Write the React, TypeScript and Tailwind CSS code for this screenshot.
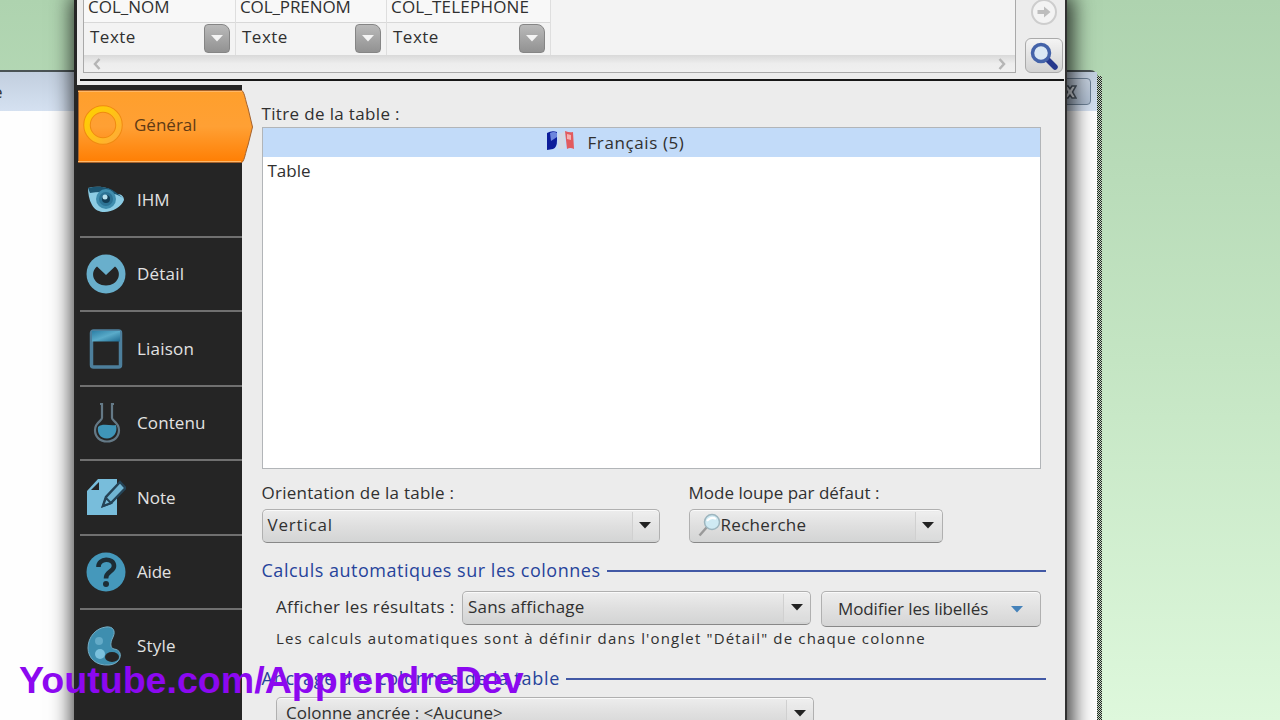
import type { ReactNode } from "react";
import { clsx } from "clsx";

const columns = [
  { name: "COL_NOM", width: "w-[152px]", nameTracking: "tracking-[0px]" },
  { name: "COL_PRENOM", width: "w-[151px]", nameTracking: "tracking-[-0.1px]" },
  { name: "COL_TELEPHONE", width: "w-[164px]", nameTracking: "tracking-[0.2px]" },
];

function EyeIcon() {
  return (
    <svg width="40" height="40" viewBox="0 0 40 40">
      <path d="M2 8 C12 5 24 7 31 14 C36 14 38 17 38 20 C34 31 13 38 6 25 C3 20 2 13 2 8Z" fill="#8ccce4" />
      <path d="M2 8 C13 5 25 7 32 14 L37 18 C28 12 16 11 4 13Z" fill="#1d5672" />
      <circle cx="20" cy="19" r="10" fill="#3f8dae" />
      <circle cx="20" cy="19" r="7" fill="#2c7294" />
      <circle cx="20" cy="19" r="4" fill="#123d56" />
      <circle cx="19" cy="17" r="2.500" fill="#b7e0ee" />
    </svg>
  );
}

function DetailIcon() {
  return (
    <svg width="40" height="40" viewBox="0 0 40 40">
      <circle cx="20" cy="20" r="19.500" fill="#69afcc" />
      <path d="M11 12.500 L20 21 L29 12.500 C37 19 32 31.500 20 31.500 C8 31.500 3 19 11 12.500Z" fill="#252525" />
    </svg>
  );
}

function LiaisonIcon() {
  return (
    <svg width="40" height="40" viewBox="0 0 40 40">
      <defs>
        <linearGradient id="liaison" x2="1" y2="1">
          <stop offset="0" stopColor="#2c7fa5" />
          <stop offset="0.5" stopColor="#5aabc9" />
          <stop offset="1" stopColor="#1f6a90" />
        </linearGradient>
      </defs>
      <rect x="5.500" y="2" width="29" height="36" rx="2" fill="#252525" stroke="#4d7f9c" strokeWidth="3.500" />
      <rect x="6" y="2" width="28" height="10.500" fill="url(#liaison)" />
    </svg>
  );
}

function FlaskIcon() {
  return (
    <svg width="40" height="40" viewBox="0 0 40 40">
      <path
        d="M14 1 H16 V15 C16 18 9 19 9 27 C9 34 14 38.500 21 38.500 C28 38.500 33 34 33 27 C33 19 26 18 26 15 V1 H28"
        fill="none"
        stroke="#647986"
        strokeWidth="2.200"
      />
      <path d="M12 24 C16 20 24 23 30 22 C32 30 27 35.500 21 35.500 C14 35.500 11 30 12 24Z" fill="#3f95b8" />
    </svg>
  );
}

function NoteIcon() {
  return (
    <svg width="40" height="40" viewBox="0 0 40 40">
      <path d="M12 2 H31 V38 H1 V14Z" fill="#78bddb" />
      <path d="M13 5 V13 H5Z" fill="#252525" />
      <path d="M34 5 L39.500 11 L25 26 L17 29 L20 20Z" fill="#70b5d3" stroke="#254356" strokeWidth="2.500" />
      <path d="M20 21 L25 26 L17 29Z" fill="#79bdd9" stroke="#254356" strokeWidth="2" />
    </svg>
  );
}

function HelpIcon() {
  return (
    <svg width="40" height="40" viewBox="0 0 40 40">
      <circle cx="20" cy="20" r="19.500" fill="#4598bb" />
      <path
        d="M12.500 15 C12 5.500 28 5.500 28 14 C28 20 20 19 20 26.500"
        fill="none"
        stroke="#1d2d36"
        strokeWidth="4.600"
      />
      <circle cx="20" cy="32" r="3" fill="#1d2d36" />
    </svg>
  );
}

function PaletteIcon() {
  return (
    <svg width="40" height="40" viewBox="0 0 40 40">
      <path
        d="M20 1 C27 0 30 5 27 11 C24 17 24 22 28 23 C38 24 36 38 23 39 C10 40 2 32 2 22 C2 11 10 2 20 1Z"
        fill="#3e8eaf"
        stroke="#76adc4"
        strokeWidth="1"
      />
      <ellipse cx="26" cy="31" rx="7" ry="5" fill="#252525" />
      <circle cx="13" cy="15" r="4" fill="#64abc8" />
      <circle cx="14" cy="28" r="5" fill="#7bc1dd" />
    </svg>
  );
}

const tabs: { label: string; icon: ReactNode; tracking: string }[] = [
  { label: "IHM", icon: <EyeIcon />, tracking: "" },
  { label: "Détail", icon: <DetailIcon />, tracking: "tracking-[0.2px]" },
  { label: "Liaison", icon: <LiaisonIcon />, tracking: "tracking-[0.2px]" },
  { label: "Contenu", icon: <FlaskIcon />, tracking: "tracking-[0.1px]" },
  { label: "Note", icon: <NoteIcon />, tracking: "" },
  { label: "Aide", icon: <HelpIcon />, tracking: "tracking-[-0.2px]" },
  { label: "Style", icon: <PaletteIcon />, tracking: "tracking-[0.2px]" },
];

function Arrow({ className }: { className?: string }) {
  return (
    <svg width="14" height="8" viewBox="0 0 14 8" className={className}>
      <path d="M1 1 H13 L7 7.500Z" fill="currentColor" />
    </svg>
  );
}

function Select({ className, children }: { className: string; children: ReactNode }) {
  return (
    <div
      className={clsx(
        "flex h-[34px] shrink-0 items-center rounded-[5px] border border-[#b0b0b0] border-b-[#888] bg-linear-to-b from-[#ededed] via-[#dfdfdf] to-[#d3d4d4] shadow-[inset_0_1px_0_#fafafa]",
        className
      )}
    >
      <div className="-mt-[2px] flex flex-1 items-center">{children}</div>
      <div className="flex h-[28px] w-[27px] items-center justify-center border-l border-[#d0d0d0] bg-white/15 pr-[1px] pb-[2px]">
        <Arrow className="text-[#222]" />
      </div>
    </div>
  );
}

function SectionTitle({ children, tracking }: { children: ReactNode; tracking: string }) {
  return (
    <div className="-mr-px flex h-6 items-center gap-[6px] text-[18px] text-[#26439b]">
      <span className={tracking}>{children}</span>
      <div className="mt-[2px] mr-px h-[2px] flex-1 bg-[#4259a5]" />
    </div>
  );
}

function BackWindow() {
  return (
    <div className="absolute top-[70px] -left-4 h-[700px] w-[1114px] rounded-tr-lg border-t-2 border-r border-[#4a5354] bg-[#fefefe]">
      <div className="flex h-[39px] items-center justify-between bg-linear-to-b from-[#c2cfdf] to-[#d5e1f1] pr-[6px] pl-[9px]">
        <span className="text-[17px] text-[#333]">e</span>
        <div className="flex h-[27px] w-[42px] items-center justify-center rounded-sm border border-[#6d8196] bg-linear-to-b from-[#c5d0de] to-[#aebdd0]">
          <svg width="14" height="14" viewBox="0 0 14 14" className="-ml-px">
            <path d="M1 1 H5 L7 4 L9 1 H13 L9.500 7 L13 13 H9 L7 10 L5 13 H1 L4.500 7Z" fill="#e4e9ef" stroke="#4e5965" strokeWidth="1.500" />
          </svg>
        </div>
      </div>
      <div className="absolute top-[4px] -right-[5px] h-[700px] w-[5px] bg-[#333] bg-[repeating-conic-gradient(#202820_0_25%,#c5d5c5_0_50%)] bg-size-[2px_2px]" />
    </div>
  );
}

function TableHeader() {
  return (
    <div className="flex h-[79px] shrink-0 justify-between pl-[4px]">
      <div className="flex h-[73px] w-[933px] flex-col border-x border-b border-[#a9a9a9] bg-[#f3f3f3]">
        <div className="flex h-[55px]">
          {columns.map((c) => (
            <div key={c.name} className={clsx("flex flex-col border-r border-[#dedede]", c.width)}>
              <div className={clsx("h-[23px] border-b border-[#d8d8d8] bg-[#f8f8f8] pl-[4px] text-[17px] leading-[14px]", c.nameTracking)}>
                {c.name}
              </div>
              <div className="flex h-[30px] items-center justify-between pr-[5px] pl-[6px]">
                <span className="-mt-[3px] tracking-[0.5px]">Texte</span>
                <div className="flex h-[29px] w-[26px] items-center justify-center rounded-sm rounded-tr-lg border border-[#858585] bg-linear-to-b from-[#bababa] to-[#929292]">
                  <Arrow className="text-[#f4f4f4]" />
                </div>
              </div>
            </div>
          ))}
        </div>
        <div className="flex flex-1 items-center justify-between bg-linear-to-b from-[#d9d9d9] via-[#ededed] to-[#f0f0f0] px-[9px]">
          <svg width="8" height="12" viewBox="0 0 8 12">
            <path d="M6.500 1 L2 6 L6.500 11" fill="none" stroke="#b5b5b5" strokeWidth="2.500" />
          </svg>
          <svg width="8" height="12" viewBox="0 0 8 12">
            <path d="M1.500 1 L6 6 L1.500 11" fill="none" stroke="#b5b5b5" strokeWidth="2.500" />
          </svg>
        </div>
      </div>
      <div className="flex w-[39px] flex-col">
        <div className="flex h-[38px] items-center justify-center">
          <svg width="28" height="28" viewBox="0 0 28 28" className="-mt-[14px] -ml-px">
            <circle cx="14" cy="14" r="12" fill="#f3f3f3" stroke="#cdcdcd" strokeWidth="2" />
            <path d="M7.500 12 H14 V8.500 L20.500 14 L14 19.500 V16 H7.500Z" fill="#bdbdbd" />
          </svg>
        </div>
        <div className="flex h-[35px] w-[38px] items-center justify-center rounded-md border border-[#aaa] bg-linear-to-b from-[#f4f4f4] to-[#d2d2d2]">
          <svg width="28" height="28" viewBox="0 0 28 28">
            <path d="M17 17 L25 25" stroke="#26388c" strokeWidth="5.500" strokeLinecap="round" />
            <circle cx="11" cy="11" r="8.500" fill="#dae8f4" stroke="#4463a9" strokeWidth="3.500" />
          </svg>
        </div>
      </div>
    </div>
  );
}

function Sidebar() {
  return (
    <div className="mt-[4px] flex w-[165px] shrink-0 flex-col bg-[#252525] text-[#e2e2e2]">
      <div className="relative mt-[5px] flex h-[73px] shrink-0 items-center">
        <svg width="176" height="73" viewBox="0 0 176 73" className="absolute top-0 left-px">
          <defs>
            <linearGradient id="active" x2="0" y2="1">
              <stop offset="0" stopColor="#ff9f2c" />
              <stop offset="0.5" stopColor="#ffa034" />
              <stop offset="1" stopColor="#ff7e03" />
            </linearGradient>
            <linearGradient id="ring" x2="1" y2="1">
              <stop offset="0" stopColor="#ffd000" />
              <stop offset="0.45" stopColor="#ffc414" />
              <stop offset="1" stopColor="#ffa93a" />
            </linearGradient>
          </defs>
          <path d="M0.500 0.500 H164 C167 4 167 9 170 18 L174.500 37 L170 55 C167 64 167 69 164 72.500 H0.500Z" fill="url(#active)" stroke="#a5622c" />
          <path d="M0 1.500 H164 M0 71.500 H163" stroke="#ffb868" />
          <circle cx="25" cy="35" r="16" fill="none" stroke="#f08a10" strokeWidth="7.500" />
          <circle cx="25" cy="35" r="16" fill="none" stroke="url(#ring)" strokeWidth="5.500" />
        </svg>
        <span className="relative -mt-[3px] ml-[57px] text-[#5f3a14]">Général</span>
      </div>
      <div className="mt-[0.6px] ml-[3px] divide-y-2 divide-[#707070]">
        {tabs.map((t) => (
          <div key={t.label} className="flex h-[74.4px] items-center gap-[11px] pl-[6px] last:pb-[3px]">
            {t.icon}
            <span className={t.tracking}>{t.label}</span>
          </div>
        ))}
      </div>
    </div>
  );
}

function GeneralPane() {
  return (
    <div className="flex min-w-0 flex-1 flex-col pt-[20px] pr-[18px] pl-[19.5px]">
      <div className="h-[26px] leading-[26px] tracking-[0.35px]">Titre de la table :</div>
      <div className="h-[342px] w-[779px] shrink-0 border border-[#b2b5b8] bg-white">
        <div className="flex h-[29px] items-center bg-[#c2dbf9] pl-[284px]">
          <svg width="28" height="22" viewBox="0 0 28 22" className="-mt-[3px]">
            <path d="M0 3 Q5 0 10 2 V10 Q10 18 6 19 L0 20Z" fill="#0c1d9b" />
            <path d="M3 3 Q7 1 10 3 V7 L4 11Z" fill="#6d86dd" />
            <path d="M11 4 Q14 4 18 1 V18 Q14 20 11 18Z" fill="#d3dae6" />
            <path d="M18 1 Q23 3 26 2 L27 19 Q23 17 20 19Z" fill="#e25b5f" />
            <path d="M20 4 L24 5 V10 L20 9Z" fill="#f5b1b0" />
          </svg>
          <span className="ml-[13px] tracking-[0.6px]">Français (5)</span>
        </div>
        <div className="pl-[5px] leading-[28px]">Table</div>
      </div>
      <div className="mt-[11px] flex gap-[29px]">
        <div className="w-[398px]">
          <div className="h-[29px] leading-[25px] tracking-[0.25px]">Orientation de la table :</div>
          <Select className="w-[398px] pl-[5px] tracking-[0.8px]">Vertical</Select>
        </div>
        <div>
          <div className="h-[29px] leading-[25px]">Mode loupe par défaut :</div>
          <Select className="w-[254px] pl-[8px]">
            <svg width="23" height="24" viewBox="0 0 23 24">
              <path d="M9 14 L1.500 22.500" stroke="#999" strokeWidth="2.500" />
              <circle cx="14" cy="9" r="7.500" fill="#cfeaf3" stroke="#9db5be" strokeWidth="1.500" />
              <path d="M9 8 Q13 3 18 6" stroke="white" strokeWidth="2" fill="none" />
            </svg>
            <span className="tracking-[0.3px]">Recherche</span>
          </Select>
        </div>
      </div>
      <div className="mt-[15px]">
        <SectionTitle tracking="tracking-[0.52px]">Calculs automatiques sur les colonnes</SectionTitle>
      </div>
      <div className="mt-[9px] flex pl-[14.5px]">
        <span className="w-[186px] leading-[32px] tracking-[0.35px]">Afficher les résultats :</span>
        <Select className="w-[349px] pl-[5px] tracking-[0.2px]">Sans affichage</Select>
        <div className="ml-[10px] flex h-[36px] w-[220px] items-center justify-between rounded-[5px] border border-[#b0b0b0] border-b-[#888] bg-linear-to-b from-[#ededed] to-[#d5d5d5] px-[16px] shadow-[inset_0_1px_0_#fafafa]">
          <span className="tracking-[-0.1px]">Modifier les libellés</span>
          <Arrow className="text-[#4582ba]" />
        </div>
      </div>
      <div className="pl-[14.5px] text-[15px] leading-[23px] tracking-[1.16px]">
        Les calculs automatiques sont à définir dans l'onglet "Détail" de chaque colonne
      </div>
      <div className="mt-[16px]">
        <SectionTitle tracking="tracking-[0.75px]">Ancrage des colonnes de la table</SectionTitle>
      </div>
      <div className="mt-[7px] pl-[14.5px]">
        <Select className="w-[538px] pl-[9px]">{"Colonne ancrée : <Aucune>"}</Select>
      </div>
    </div>
  );
}

export default function App() {
  return (
    <div className="relative h-[720px] w-[1280px] overflow-hidden bg-linear-to-b from-[#aed3af] via-[#c4e5c3] to-[#def8dc] font-['Open_Sans','Noto_Sans',sans-serif] text-[17px] whitespace-nowrap text-[#303030]">
      <BackWindow />
      <div className="absolute -top-px left-[74px] flex h-[760px] w-[993px] flex-col border-r-2 border-l-3 border-[#303030] border-l-[#262626] bg-[#ececec] pt-px pr-px pl-[2px] shadow-[2px_0_20px_4px_rgba(0,0,0,0.78)]">
        <TableHeader />
        <div className="ml-px h-[2px] shrink-0 bg-[#171717]" />
        <div className="-ml-[2px] flex flex-1">
          <Sidebar />
          <GeneralPane />
        </div>
      </div>
      <div className="absolute top-[660px] left-[19px] font-['Liberation_Sans',sans-serif] text-[37.6px] leading-[40px] font-bold text-[#8c08f0]">
        Youtube.com/ApprendreDev
      </div>
    </div>
  );
}
